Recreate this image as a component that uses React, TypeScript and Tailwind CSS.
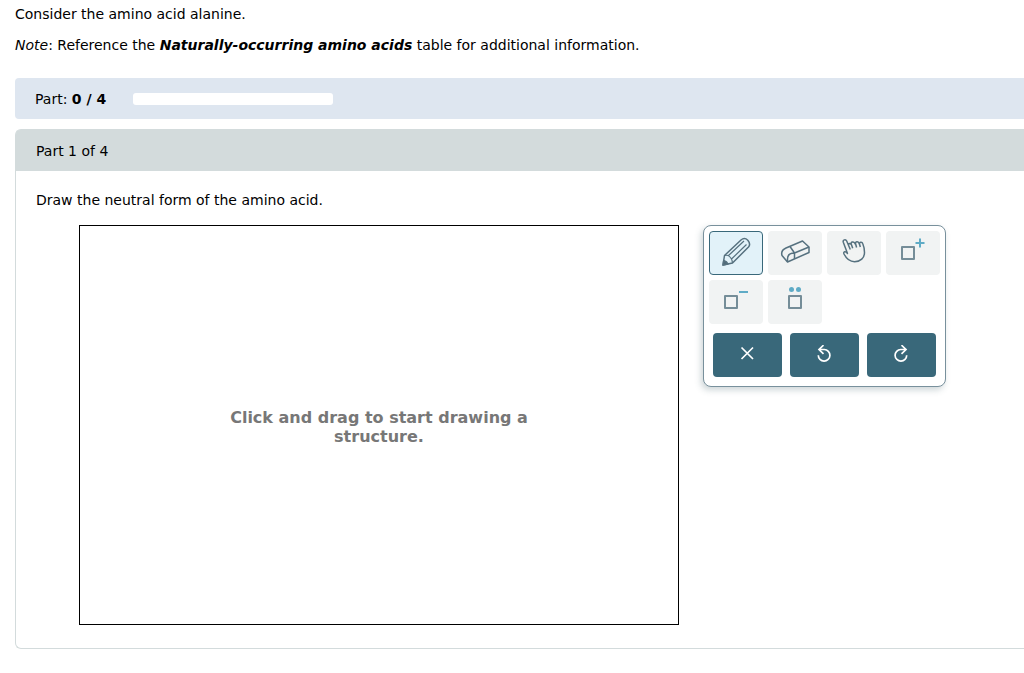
import { useState, type ReactNode } from "react";

type Tool = {
  id: string;
  label: string;
  icon: ReactNode;
};

const tools: Tool[] = [
  {
    id: "draw",
    label: "Draw",
    icon: (
      <>
        <path d="M13 33L14.500 23.500L31 8Q34.500 5 37.800 8.200Q41 12 38.500 15L22.500 31Z" />
        <path d="M14.500 23.500Q18.500 22.500 20.500 25.500Q22.500 28 22.500 31M18.500 23.500L34 9M21.500 27L36.500 12.500" strokeWidth="1.2" />
        <path d="M13 33L13.700 28.500Q17 29.500 18 32Z" fill="#4f6b7a" />
      </>
    ),
  },
  {
    id: "erase",
    label: "Erase",
    icon: (
      <>
        <path d="M17 16L33.500 9L40 15V20.500L18.500 30L13 23.500Q11.500 18.500 17 16Z" />
        <path d="M18.500 30V27Q18.500 21 25.500 21L40 15M21 14.500L25.500 21V27" />
      </>
    ),
  },
  {
    id: "move",
    label: "Move",
    icon: (
      <path d="M22.300 17.500L18.700 9C17.700 6.800 14.500 7.800 15.300 10.200L19.500 21.500C17.500 18.800 15 19.500 16 22C18.500 27 21.500 29.700 26.500 29.700C32.500 29.700 36.500 26 36.500 20.500C36.500 17 36 14.500 34.800 11.700C34 9.500 31.200 10.200 31.500 12L32.300 15M31.500 12.500L30.900 11C30 9 27.200 9.700 27.500 11.500L28.600 15.500M27.500 12.500L26.800 11.200C25.700 9.200 22.500 10 23.200 12L24.700 16.200M23.200 12.200Q21.500 11 20.200 12.300" />
    ),
  },
  {
    id: "positive",
    label: "Add positive charge",
    icon: (
      <>
        <path d="M15 15h12v12H15z" stroke="#758d98" strokeWidth="2" />
        <path d="M33 6.500v9M28.500 11h9" stroke="#5fabc6" strokeWidth="2" />
      </>
    ),
  },
  {
    id: "negative",
    label: "Add negative charge",
    icon: (
      <>
        <path d="M15 15h12v12H15z" stroke="#758d98" strokeWidth="2" />
        <path d="M29 11h9" stroke="#5fabc6" strokeWidth="2" />
      </>
    ),
  },
  {
    id: "lone-pair",
    label: "Add lone pair",
    icon: (
      <>
        <path d="M20 15h12v12H20z" stroke="#758d98" strokeWidth="2" />
        <circle cx="22.500" cy="8.500" r="2.500" fill="#5fabc6" stroke="none" />
        <circle cx="29.500" cy="8.500" r="2.500" fill="#5fabc6" stroke="none" />
      </>
    ),
  },
];

const actions: Tool[] = [
  { id: "clear", label: "Clear", icon: <path d="M4.500 2.500L16 14M16 2.500L4.500 14" /> },
  {
    id: "undo",
    label: "Undo",
    icon: <path d="M9.500 .2L5 4.500L9.500 8.800M5 4.500H10.300A5.800 5.800 0 1 1 4.300 10.300" />,
  },
  {
    id: "redo",
    label: "Redo",
    icon: <path d="M10.500 .2L15 4.500L10.500 8.800M15 4.500H9.700A5.800 5.800 0 1 0 15.700 10.300" />,
  },
];

function Toolbox() {
  const [active, setActive] = useState("draw");

  return (
    <div className="shrink-0 rounded-lg border border-[#78909c] bg-white p-[5px] pb-[9px] shadow-[-2px_3px_6px_rgba(60,90,100,0.25)]">
      <div className="grid grid-cols-4 gap-[5px]">
        {tools.map((tool) => (
          <button
            key={tool.id}
            type="button"
            aria-label={tool.label}
            aria-pressed={active === tool.id}
            onClick={() => setActive(tool.id)}
            className={`rounded border ${
              active === tool.id ? "border-[#39687a] bg-[#e2f2f9]" : "border-transparent bg-[#f1f3f3]"
            }`}
          >
            <svg
              width="52"
              height="42"
              viewBox="0 0 52 42"
              fill="none"
              stroke="#56717f"
              strokeWidth="1.5"
              strokeLinejoin="round"
              strokeLinecap="butt"
            >
              {tool.icon}
            </svg>
          </button>
        ))}
      </div>
      <div className="mt-[9px] flex gap-2 px-1">
        {actions.map((action) => (
          <button
            key={action.id}
            type="button"
            aria-label={action.label}
            className="flex h-11 flex-1 items-center justify-center rounded bg-[#39687a]"
          >
            <svg
              width="21"
              height="20"
              viewBox="0 0 21 20"
              fill="none"
              stroke="white"
              strokeWidth="1.7"
              strokeLinecap="butt"
            >
              {action.icon}
            </svg>
          </button>
        ))}
      </div>
    </div>
  );
}

export default function App() {
  return (
    <main className="overflow-hidden bg-white pt-1 pl-[15px] font-['DejaVu_Sans',Verdana,sans-serif] text-sm text-black">
      <p>Consider the amino acid alanine.</p>
      <p className="mt-[11px]">
        <em>Note</em>: Reference the <strong className="italic">Naturally-occurring amino acids</strong> table
        for additional information.
      </p>

      {/* Progress */}
      <div className="mt-[23px] flex h-[41px] items-center rounded-l bg-[#dee6f0] pl-5">
        <span>
          Part: <strong>0 / 4</strong>
        </span>
        <div
          role="progressbar"
          aria-label="Parts completed"
          aria-valuenow={0}
          aria-valuemin={0}
          aria-valuemax={4}
          className="ml-[27px] h-3 w-[200px] rounded-[3px] bg-white"
        />
      </div>

      {/* Current part */}
      <section className="mt-[10px] rounded-l-md border border-r-0 border-[#d3dbdc]">
        <h2 className="rounded-tl bg-[#d3dbdc] pt-[11px] pb-[10px] pl-5 leading-5">Part 1 of 4</h2>
        <div className="pt-[19px] pb-[23px] pl-5">
          <p>Draw the neutral form of the amino acid.</p>
          <div className="mt-[15px] flex items-start gap-6 pl-[43px]">
            <div className="flex h-[400px] w-[600px] shrink-0 items-center justify-center border border-black pt-[3px]">
              <p className="max-w-[300px] text-center text-base leading-[19px] font-bold text-[#777]">
                Click and drag to start drawing a structure.
              </p>
            </div>
            <Toolbox />
          </div>
        </div>
      </section>
    </main>
  );
}
